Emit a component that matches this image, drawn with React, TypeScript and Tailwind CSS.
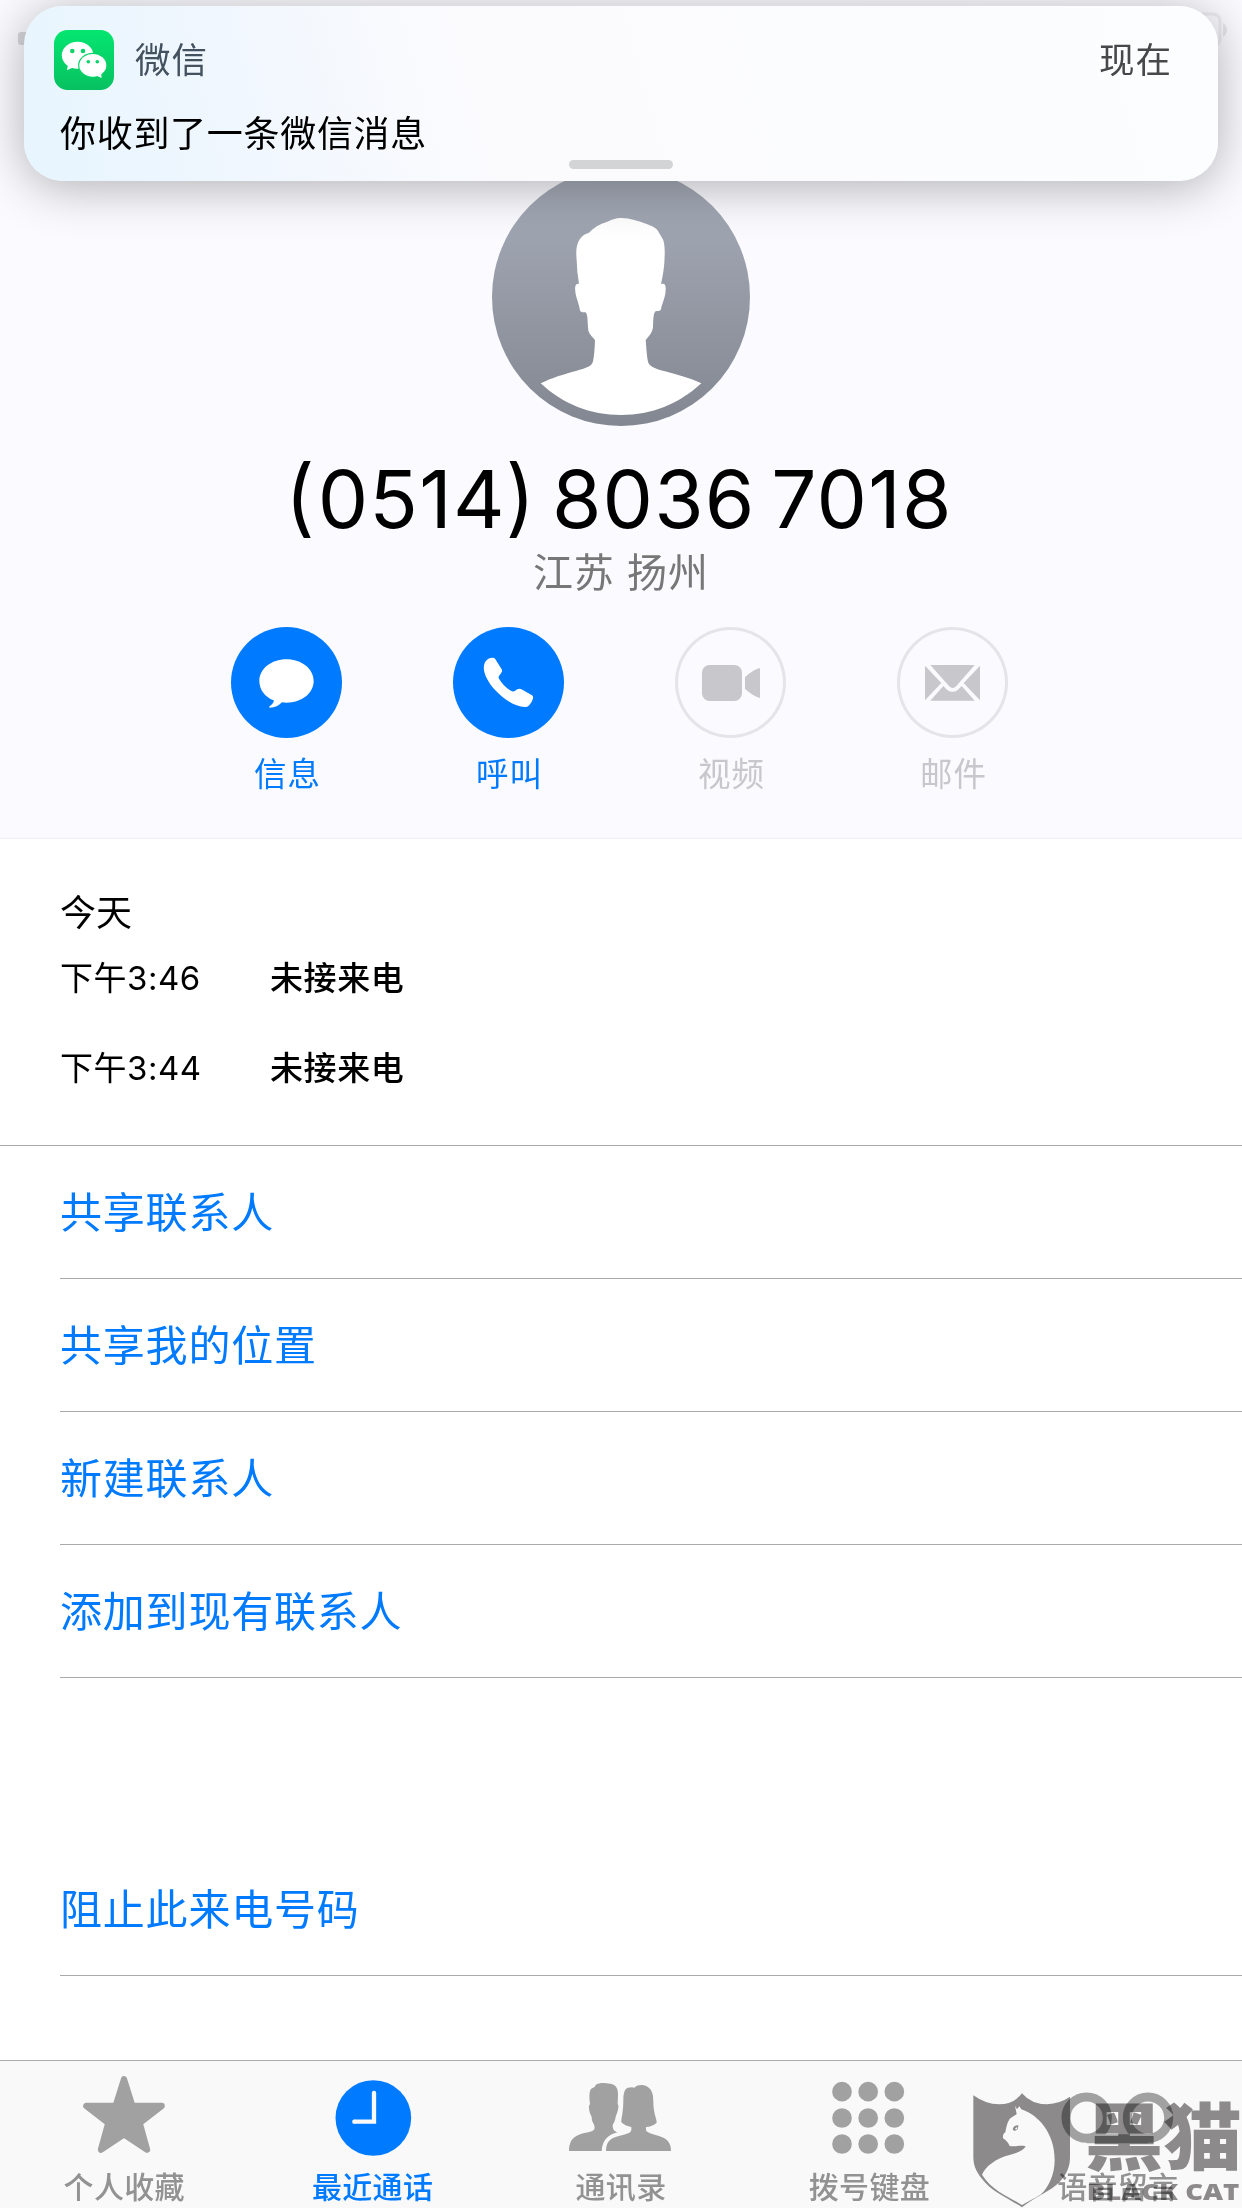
import type { ReactNode } from 'react';

interface ActionProps {
  label: string;
  disabled?: boolean;
  children: ReactNode;
}

interface TabProps {
  label: string;
  viewBox: string;
  active?: boolean;
  children: ReactNode;
}

const calls = [
  { time: '下午3:46', type: '未接来电' },
  { time: '下午3:44', type: '未接来电' },
];

const links = ['共享联系人', '共享我的位置', '新建联系人', '添加到现有联系人'];

const dots = [125, 204, 282].flatMap((y) => [907, 985.5, 1064].map((x) => ({ x, y })));

function WeChatIcon() {
  return (
    <svg viewBox="0 0 60 60" className="size-[60px]">
      <defs>
        <linearGradient id="wechat" x1="0" y1="0" x2="0" y2="1">
          <stop offset="0" stopColor="#04e670" />
          <stop offset="1" stopColor="#07c160" />
        </linearGradient>
      </defs>
      <rect width="60" height="60" rx="13.5" fill="url(#wechat)" />
      <path d="M14 34 L13 40.2 L20 37Z" fill="#fff" />
      <ellipse cx="23.6" cy="25.2" rx="15.8" ry="13.5" fill="#fff" />
      <ellipse cx="38.8" cy="35.3" rx="14.7" ry="12.6" fill="#06d368" />
      <path d="M42 45.5 L47.6 48 L47 42Z" fill="#fff" />
      <ellipse cx="38.8" cy="35.3" rx="13.5" ry="11.4" fill="#fff" />
      <g fill="#06d368">
        <circle cx="18.3" cy="21" r="2.3" />
        <circle cx="29" cy="21" r="2.3" />
        <circle cx="34.3" cy="31.7" r="1.8" />
        <circle cx="43.3" cy="31.7" r="1.8" />
      </g>
    </svg>
  );
}

function Banner() {
  return (
    <div className="absolute left-6 top-[6px] w-[1194px] h-[175px] rounded-[39px] pt-6 pl-[30px] pr-[46px] bg-[linear-gradient(75deg,#e7f5fe_0%,#f0f7fe_18%,#fbfbfe_38%,#fcfdff_100%)] shadow-[0_6px_50px_rgba(0,0,0,0.3)]">
      <div className="flex items-center h-[60px]">
        <WeChatIcon />
        <span className="ml-[21px] text-[35.5px] leading-[53px] tracking-[1px] text-[#44525f]">微信</span>
        <span className="ml-auto text-[35.5px] leading-[53px] tracking-[1px] text-[#48484b]">现在</span>
      </div>
      <p className="mt-[17px] ml-[6px] text-[36px] leading-[54px] tracking-[0.7px] text-black">你收到了一条微信消息</p>
      <div className="absolute left-[545px] bottom-3 w-[104px] h-[9px] rounded-full bg-[#d3d4d6]" />
    </div>
  );
}

function Avatar() {
  return (
    <svg viewBox="66 84 774 774" className="size-[258px]">
      <defs>
        <linearGradient id="avatar" x1="0" y1="0" x2="0" y2="1">
          <stop offset="0" stopColor="#a7adba" />
          <stop offset="1" stopColor="#838791" />
        </linearGradient>
      </defs>
      <circle cx="453" cy="471" r="387" fill="url(#avatar)" />
      <path
        fill="#fff"
        d="M455 234C435 234 425 240 410 246C390 252 372 262 356 279C335 284 317 305 319 345L322 395L327 431C316 430 314 438 316 455C318 475 326 485 330 512C334 518 340 516 347 517C354 525 352 545 355 572C360 585 368 592 375 600C374 630 372 650 369 664C366 680 345 685 320 692C280 703 245 713 212 730C280 793 360 825 453 825C546 825 625 793 694 730C660 714 620 703 585 694C560 687 540 680 535 668C530 650 529 620 527 600C540 585 548 575 549 560C550 545 549 525 555 515C562 512 570 515 573 508C576 490 588 470 587 445C587 432 582 429 573 432C580 400 585 370 584 330C583 295 576 297 568 280C560 262 545 258 530 252C505 243 480 234 455 234Z"
      />
    </svg>
  );
}

function Action({ label, disabled, children }: ActionProps) {
  return (
    <div className={`flex flex-col items-center w-[111px] ${disabled ? 'text-[#c8c7cc]' : 'text-[#007aff]'}`}>
      <div className={`size-[111px] rounded-full ${disabled ? 'shadow-[inset_0_0_0_3px_#e5e4e9]' : 'bg-[#007aff]'}`}>
        {children}
      </div>
      <span className="mt-[13px] ml-[2px] text-[32.5px] leading-[48px] tracking-[1px]">{label}</span>
    </div>
  );
}

function Tab({ label, viewBox, active, children }: TabProps) {
  return (
    <div className={`flex-1 flex flex-col items-center ${active ? 'text-[#007aff]' : 'text-[#929292]'}`}>
      <svg viewBox={viewBox} className={`w-[120px] h-[105px] ${active ? 'fill-[#007aff]' : 'fill-[#a1a1a1]'}`}>
        {children}
      </svg>
      <span className="text-[30px] leading-[42px] tracking-[0.3px] font-medium">{label}</span>
    </div>
  );
}

function Watermark() {
  return (
    <svg viewBox="90 120 810 354" className="absolute left-[972px] top-[2090px] w-[270px] h-[118px] mix-blend-multiply" fill="#8f8d8e">
      <path
        fillRule="evenodd"
        d="M94 136Q132 163 170 163Q215 163 240 130Q268 163 315 163Q355 160 384 140V320C384 350 375 370 355 393C330 422 280 440 240 472C200 445 160 430 130 398C105 370 94 350 94 320ZM219 167L225 178L232 169L238 178C290 195 338 250 338 330C338 370 322 410 297 433C275 447 258 455 240 465C200 440 150 422 120 374C130 350 160 325 205 314C230 308 245 300 251 289C235 285 220 291 203 288C200 280 192 270 183 265C182 255 185 250 190 247C193 232 196 215 205 205C215 197 222 195 224 192Z"
      />
      <path fillRule="evenodd" d="M212 238Q215 226 229 226Q230 240 217 243ZM219 236A3 4 0 1 0 225 231Z" />
      <text x="428" y="341" textLength="472" lengthAdjust="spacingAndGlyphs" className="text-[218px] font-black">
        黑猫
      </text>
      <text x="434" y="451" textLength="458" lengthAdjust="spacingAndGlyphs" className="text-[68px] font-extrabold font-['Open_Sans',sans-serif]">
        BLACK CAT
      </text>
    </svg>
  );
}

export default function App() {
  return (
    <div className="relative flex flex-col w-[1242px] h-[2208px] overflow-hidden bg-white font-['Inter','Noto_Sans_CJK_SC',sans-serif]">
      {/* Contact header */}
      <header className="relative flex flex-col items-center h-[839px] shrink-0 pt-[168px] bg-[#fafaff] border-b border-[#efeff4]">
        {/* Status bar, mostly behind the banner */}
        <div className="absolute left-[18px] top-8 w-4 h-[13px] rounded-[3px] bg-[#d8d8dc]" />
        <svg viewBox="0 0 84 36" className="absolute left-[1144px] top-[12px] w-[84px] h-9">
          <rect x="2" y="2" width="74" height="32" rx="7" fill="none" stroke="#ececf1" strokeWidth="3" />
          <path d="M79 11Q83 14 83 18T79 25Z" fill="#e6e6eb" />
        </svg>
        <Avatar />
        <h1 className="mt-[25px] mr-[2px] text-[80px] leading-[96px] tracking-[1.2px] [word-spacing:-8px] text-black whitespace-nowrap">
          <span className="inline-block scale-y-[1.06] -translate-x-[2px] -translate-y-1">(</span>0514
          <span className="inline-block scale-y-[1.06] -translate-y-1">)</span> 8036 7018
        </h1>
        <p className="-mt-[3px] text-[40px] leading-[58px] tracking-[1px] text-[#777]">江苏 扬州</p>
        <div className="flex gap-[111px] mt-[25px] pr-[3px]">
          <Action label="信息">
            <svg viewBox="33 51 333 333" fill="#fff">
              <path d="M199.5 148C245 148 281 177 281 213C281 250 245 278 199.5 278C195 278 190 278 186 277C176 287 165 293 150 293C146 293 147 290 150 288C158 282 162 277 161 271C134 261 118 238 118 213C118 177 154 148 199.5 148Z" />
            </svg>
          </Action>
          <Action label="呼叫">
            <svg viewBox="699 51 333 333" fill="#fff">
              <path d="M795 157C802 146 812 142 822 144C826 146 827 149 829 152L845 178C848 184 845 187 842 191C838 197 834 199 837 206C846 222 862 237 876 244C882 247 886 241 892 238C898 235 902 236 907 239L936 256C941 260 940 265 937 271C933 280 927 290 918 291C890 293 855 272 826 241C802 214 783 180 795 157Z" />
            </svg>
          </Action>
          <Action label="视频" disabled>
            <svg viewBox="45 51 333 333" fill="#c8c7cc">
              <rect x="126" y="165" width="120" height="108" rx="23" />
              <path d="M255 201C270 188 288 176 300 174V264C286 261 270 250 255 237Z" />
            </svg>
          </Action>
          <Action label="邮件" disabled>
            <svg viewBox="711 51 333 333" fill="#c8c7cc">
              <path d="M811 165H944L889 228Q878 240 867 228Z" />
              <path d="M795 167L844 219L795 271Z" />
              <path d="M960 167L911 219L960 271Z" />
              <path d="M811 272L850 228L861 239Q877 252 894 239L905 228L944 272Z" />
            </svg>
          </Action>
        </div>
      </header>

      {/* Call history */}
      <section className="h-[307px] shrink-0 pl-[60px] pt-[47px] border-b border-[#a9a9ab] text-black">
        <h2 className="text-[36px] leading-[54px]">今天</h2>
        {calls.map((call) => (
          <div key={call.time} className="flex items-center h-[90px] -mt-[6px] mb-[6px] text-[33px]">
            <span className="w-[210px] tracking-[0.5px]">{call.time}</span>
            <span className="font-medium tracking-[0.6px]">{call.type}</span>
          </div>
        ))}
      </section>

      {/* Contact options */}
      <section className="flex-1 text-[42px] tracking-[0.8px] text-[#007aff]">
        {links.map((link) => (
          <div key={link} className="flex items-center h-[133px] ml-[60px] border-b border-[#a9a9ab]">
            {link}
          </div>
        ))}
        <div className="flex items-center h-[133px] ml-[60px] mt-[165px] border-b border-[#a9a9ab]">阻止此来电号码</div>
      </section>

      {/* Tab bar */}
      <nav className="flex h-[148px] shrink-0 bg-[#f9f9f9] border-t border-[#acacae]">
        <Tab label="个人收藏" viewBox="192 33 360 315">
          <path
            d="M372 88L397 168H485L419 219L441 299L372 253L303 299L325 219L259 168H347Z"
            className="stroke-[#a1a1a1]"
            strokeWidth="19"
            strokeLinejoin="round"
          />
        </Tab>
        <Tab label="最近通话" viewBox="938 33 360 315" active>
          <circle cx="1119" cy="204" r="113.5" />
          <path d="M1121 129V221.5M1127.5 215H1062" fill="none" stroke="#f9f9f9" strokeWidth="13" />
          <circle cx="1121" cy="129" r="6.5" fill="#f9f9f9" />
          <circle cx="1062" cy="215" r="6.5" fill="#f9f9f9" />
        </Tab>
        <Tab label="通讯录" viewBox="63 33 360 315">
          <path d="M87 303C87 275 98 262 115 255C135 247 158 247 163 238C165 230 163 226 160 220C156 214 155 206 155 200C151 195 148 185 147 175C146 168 148 165 150 163C148 145 147 130 151 120C155 112 163 116 167 105C175 98 195 98 210 101C225 103 235 112 234 135L233 162C237 166 235 175 233 183C230 192 229 195 227 200C226 210 222 218 218 225C218 238 222 244 233 247C205 253 187 270 185 303Z" />
          <path d="M198 303C198 280 207 268 225 262C250 253 273 252 274 240V231C262 229 250 224 244 217C243 205 250 190 250 150C250 120 258 112 275 112C280 112 282 114 285 112C292 104 310 103 322 110C335 118 340 130 340 155C340 190 350 205 350 218C342 226 330 230 318 231V240C320 250 345 253 365 261C385 269 393 283 393 303Z" />
        </Tab>
        <Tab label="拨号键盘" viewBox="808 33 360 315">
          {dots.map((dot) => (
            <circle key={`${dot.x}-${dot.y}`} cx={dot.x} cy={dot.y} r="29.5" />
          ))}
        </Tab>
        <Tab label="语音留言" viewBox="347 33 360 315">
          <path d="M433 266.5H617" className="stroke-[#a1a1a1]" strokeWidth="27" />
          <circle cx="433" cy="203" r="62" fill="none" className="stroke-[#a1a1a1]" strokeWidth="27" />
          <circle cx="617" cy="203" r="62" fill="none" className="stroke-[#a1a1a1]" strokeWidth="27" />
        </Tab>
      </nav>

      <Watermark />
      <Banner />
    </div>
  );
}
